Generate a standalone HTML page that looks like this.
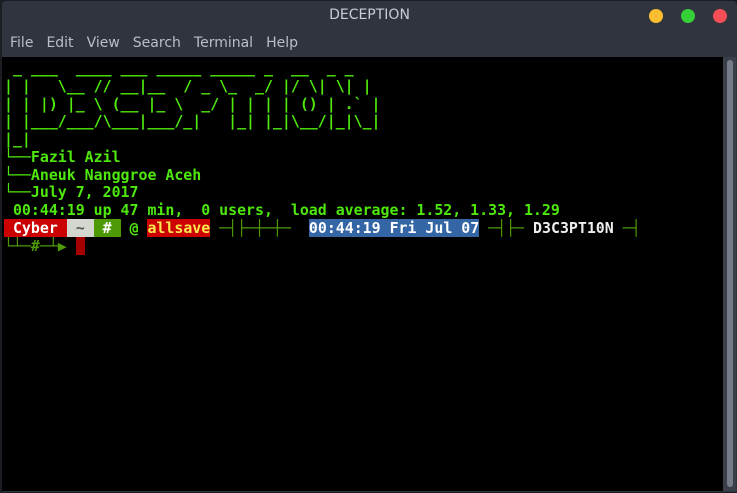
<!DOCTYPE html>
<html><head><meta charset="utf-8"><style>
html,body{margin:0;padding:0;width:737px;height:493px;overflow:hidden;background:#1b1d22;}
.win{position:absolute;left:2px;top:1px;width:735px;height:491px;background:#2f343f;border-radius:4px 4px 0 0;}
.title{position:absolute;left:0;width:735px;top:6px;text-align:center;color:#c8ccd4;font:14px "DejaVu Sans","Liberation Sans",sans-serif;}
.menu{position:absolute;top:34px;left:8px;color:#b9bec8;font:14px "DejaVu Sans","Liberation Sans",sans-serif;white-space:nowrap}
.menu span{margin-right:13px}
.dot{position:absolute;top:8px;width:14px;height:14px;border-radius:50%}
.term{position:absolute;left:2px;top:57px;width:721px;height:434px;background:#000;}
.sb{position:absolute;left:723px;top:57px;width:13px;height:434px;background:#3b3f4a}
.thumb{position:absolute;left:727px;top:60px;width:6px;height:427px;background:#767b89;border-radius:3px}
pre{position:absolute;left:4px;top:60px;margin:0;font:bold 14.9px/17.75px "DejaVu Sans Mono","Liberation Mono",monospace;color:#4ee80c;white-space:pre}
.r{background:#cc0000;color:#fff}.g{background:#d3d7cf;color:#555}.gr{background:#4e9a06;color:#fff}
.y{background:#cc0000;color:#fce94f}.b{background:#3465a4;color:#fff}.w{color:#eee}.d{color:#4e9a06}
.cur{background:#a40000;color:#a40000}
</style></head><body>
<div class="win">
<div class="title">DECEPTION</div>
<div class="dot" style="left:647px;background:#fdbd2e"></div>
<div class="dot" style="left:679px;background:#35d038"></div>
<div class="dot" style="left:711px;background:#f44e57"></div>
<div class="menu"><span>File</span><span>Edit</span><span>View</span><span>Search</span><span>Terminal</span><span>Help</span></div>
</div>
<div class="term"></div>
<div class="sb"></div><div class="thumb"></div>
<pre> _ ___  ____ ___ _____ _____ _  __  _ _ 
| |   \__ // __|__  / _ \_  _/ |/ \| \| |
| | |) |_ \ (__ |_ \  _/ | | | | () | .` |
| |___/___/\___|___/_|   |_| |_|\__/|_|\_|
|_|
└──Fazil Azil
└──Aneuk Nanggroe Aceh
└──July 7, 2017
 00:44:19 up 47 min,  0 users,  load average: 1.52, 1.33, 1.29
<span class="r"> Cyber </span><span class="g"> ~ </span><span class="gr"> # </span> @ <span class="y">allsave</span> <span class="d">─┤├─┼─┼─</span>  <span class="b">00:44:19 Fri Jul 07</span> <span class="d">─┤├─</span> <span class="w">D3C3PT10N</span> <span class="d">─┤</span>
<span class="d">└┴─#─┴▶</span> <span class="cur">_</span></pre>
</body></html>
